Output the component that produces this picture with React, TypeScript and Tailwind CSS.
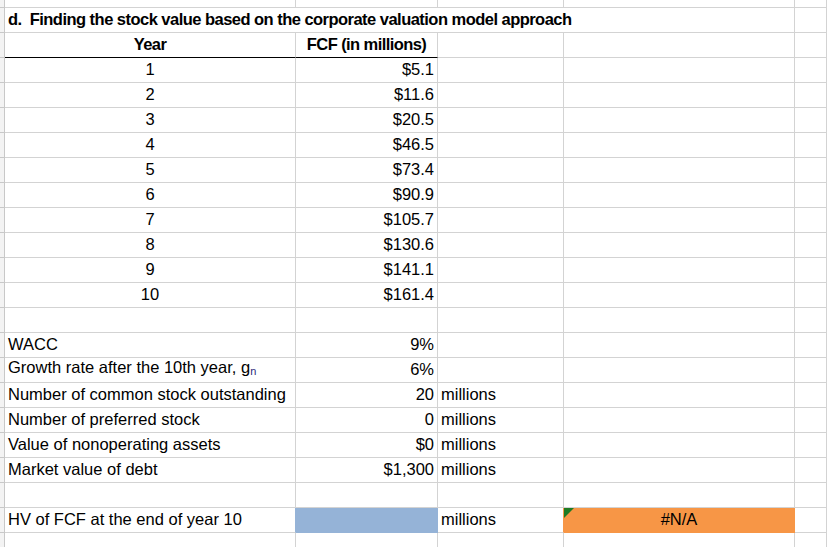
import React from "react";

const GRID = "border-[#d3d3d3]";
const cell = `border-r border-b ${GRID} flex items-end pb-[3px] px-[3px] whitespace-nowrap overflow-hidden h-full`;
const colA = "w-[291px] shrink-0";
const colB = "w-[142px] shrink-0";
const colC = "w-[126px] shrink-0";
const colD = "w-[231px] shrink-0";

function Strip() {
  return <div className="w-[5px] shrink-0 h-full bg-[#f3f3f3] border-r border-b border-[#c8c8c8]" />;
}

function Row({
  a,
  b,
  c,
  d,
  aClass = "",
  bClass = "",
  cClass = "",
  dClass = "",
  h = "h-[25px]",
}: {
  a?: React.ReactNode;
  b?: React.ReactNode;
  c?: React.ReactNode;
  d?: React.ReactNode;
  aClass?: string;
  bClass?: string;
  cClass?: string;
  dClass?: string;
  h?: string;
}) {
  return (
    <div className={`flex ${h}`}>
      <Strip />
      <div className={`${cell} ${colA} ${aClass}`}>{a}</div>
      <div className={`${cell} ${colB} ${bClass}`}>{b}</div>
      <div className={`${cell} ${colC} ${cClass}`}>{c}</div>
      <div className={`${cell} ${colD} ${dClass}`}>{d}</div>
      <div className={`${cell} flex-1`} />
    </div>
  );
}

const fcf = ["$5.1", "$11.6", "$20.5", "$46.5", "$73.4", "$90.9", "$105.7", "$130.6", "$141.1", "$161.4"];

const inputs: { label: React.ReactNode; value: string; unit?: string }[] = [
  { label: "WACC", value: "9%" },
  {
    label: (
      <>
        Growth rate after the 10th year, g
        <span className="text-[11px] text-[#2d2a7a] relative top-[2px]">n</span>
      </>
    ),
    value: "6%",
  },
  { label: "Number of common stock outstanding", value: "20", unit: "millions" },
  { label: "Number of preferred stock", value: "0", unit: "millions" },
  { label: "Value of nonoperating assets", value: "$0", unit: "millions" },
  { label: "Market value of debt", value: "$1,300", unit: "millions" },
];

export default function App() {
  return (
    <div
      className="w-[827px] h-[547px] overflow-hidden bg-white text-black text-[16.5px] leading-[19px]"
      style={{ fontFamily: '"Liberation Sans", Arial, sans-serif' }}
    >
      <Row h="h-[8px]" />
      {/* Title row */}
      <div className="flex h-[25px]">
        <Strip />
        <div className={`${cell} w-[790px] shrink-0 font-bold whitespace-pre tracking-[-0.53px]`}>
          {"d.  Finding the stock value based on the corporate valuation model approach"}
        </div>
        <div className={`${cell} flex-1`} />
      </div>
      {/* Header */}
      <Row
        a={<span className="w-full text-center font-bold tracking-[-0.55px]">Year</span>}
        b={<span className="w-full text-center font-bold tracking-[-0.58px]">FCF (in millions)</span>}
        aClass="border-b-black"
        bClass="border-b-black"
      />
      {fcf.map((v, i) => (
        <Row
          key={i}
          a={<span className="w-full text-center">{i + 1}</span>}
          b={<span className="w-full text-right">{v}</span>}
        />
      ))}
      <Row />
      {inputs.map((r, i) => (
        <Row
          key={i}
          a={<span>{r.label}</span>}
          b={<span className="w-full text-right">{r.value}</span>}
          c={r.unit ? <span>{r.unit}</span> : undefined}
        />
      ))}
      <Row />
      <Row
        a={<span>HV of FCF at the end of year 10</span>}
        aClass="border-r-[#95b3d7]"
        bClass="bg-[#95b3d7] border-b-[#95b3d7] border-r-[#95b3d7]"
        c={<span>millions</span>}
        cClass="border-r-[#f79646]"
        dClass="bg-[#f79646] border-b-[#f79646] border-r-[#f79646] relative"
        d={
          <>
            <svg className="absolute left-0 top-0" width="10" height="10" viewBox="0 0 10 10">
              <polygon points="0,0 10,0 0,10" fill="#1e7b23" />
            </svg>
            <span className="w-full text-center">#N/A</span>
          </>
        }
      />
      <Row h="h-[25px]" />
    </div>
  );
}
